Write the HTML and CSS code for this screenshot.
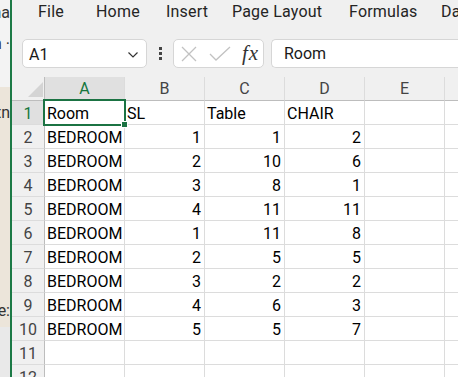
FILE: index.html
```html
<!DOCTYPE html>
<html>
<head>
<meta charset="utf-8">
<link rel="stylesheet" href="styles.css">
</head>
<body>
<div class="desk">
  <div class="dtop">
    <div class="frag f1"><span>Forma</span></div>
    <div class="frag f2"><span>Alignm ·</span></div>
  </div>
  <div class="dmid">
    <div class="frag f3"><span>Contn</span></div>
    <div class="frag f4"><span>Name:</span></div>
  </div>
  <div class="dbot"></div>
</div>
<div class="app">
  <div class="tabs">
    <span class="tab w-file">File</span>
    <span class="tab w-home">Home</span>
    <span class="tab w-insert">Insert</span>
    <span class="tab w-page">Page Layout</span>
    <span class="tab w-form">Formulas</span>
    <span class="tab">Data</span>
  </div>
  <div class="fbar">
    <div class="namebox">
      <span class="nbtext">A1</span>
      <svg class="chev" width="12" height="8" viewBox="0 0 12 8"><polyline points="1.5,1.5 6,6 10.5,1.5" fill="none" stroke="#333" stroke-width="1.2"/></svg>
    </div>
    <div class="dots"><i></i><i></i><i></i></div>
    <div class="fxbox">
      <svg width="16" height="16" viewBox="0 0 16 16"><path d="M1 1 L15 15 M15 1 L1 15" stroke="#c2c2c2" stroke-width="1.3" fill="none"/></svg>
      <svg width="22" height="16" viewBox="0 0 22 16"><polyline points="1,8 7,14 21,1" stroke="#c2c2c2" stroke-width="1.3" fill="none"/></svg>
      <span class="fx">fx</span>
    </div>
    <div class="finput">Room</div>
  </div>
  <div class="sheet">
    <div class="corner"><svg width="16" height="16" viewBox="0 0 16 16"><polygon points="16,1 16,16 1,16" fill="#d4d4d4"/></svg></div>
    <div class="ch sel">A</div><div class="ch">B</div><div class="ch">C</div><div class="ch">D</div><div class="ch">E</div><div class="ch last"></div>

    <div class="rh sel">1</div><div class="c active">Room<span class="selbox"></span><span class="handle"></span></div><div class="c">SL</div><div class="c">Table</div><div class="c">CHAIR</div><div class="c"></div><div class="c last"></div>
    <div class="rh">2</div><div class="c">BEDROOM</div><div class="c n">1</div><div class="c n">1</div><div class="c n">2</div><div class="c"></div><div class="c last"></div>
    <div class="rh">3</div><div class="c">BEDROOM</div><div class="c n">2</div><div class="c n">10</div><div class="c n">6</div><div class="c"></div><div class="c last"></div>
    <div class="rh">4</div><div class="c">BEDROOM</div><div class="c n">3</div><div class="c n">8</div><div class="c n">1</div><div class="c"></div><div class="c last"></div>
    <div class="rh">5</div><div class="c">BEDROOM</div><div class="c n">4</div><div class="c n">11</div><div class="c n">11</div><div class="c"></div><div class="c last"></div>
    <div class="rh">6</div><div class="c">BEDROOM</div><div class="c n">1</div><div class="c n">11</div><div class="c n">8</div><div class="c"></div><div class="c last"></div>
    <div class="rh">7</div><div class="c">BEDROOM</div><div class="c n">2</div><div class="c n">5</div><div class="c n">5</div><div class="c"></div><div class="c last"></div>
    <div class="rh">8</div><div class="c">BEDROOM</div><div class="c n">3</div><div class="c n">2</div><div class="c n">2</div><div class="c"></div><div class="c last"></div>
    <div class="rh">9</div><div class="c">BEDROOM</div><div class="c n">4</div><div class="c n">6</div><div class="c n">3</div><div class="c"></div><div class="c last"></div>
    <div class="rh">10</div><div class="c">BEDROOM</div><div class="c n">5</div><div class="c n">5</div><div class="c n">7</div><div class="c"></div><div class="c last"></div>
    <div class="rh">11</div><div class="c"></div><div class="c"></div><div class="c"></div><div class="c"></div><div class="c"></div><div class="c last"></div>
    <div class="rh">12</div><div class="c"></div><div class="c"></div><div class="c"></div><div class="c"></div><div class="c"></div><div class="c last"></div>
  </div>
</div>
</body>
</html>
```

FILE: styles.css
```css
* { box-sizing: border-box; }
html, body { margin: 0; padding: 0; }
body {
  width: 458px;
  height: 377px;
  overflow: hidden;
  display: flex;
  font-family: Roboto, "Liberation Sans", sans-serif;
  background: #f0f0f0;
}

/* background window strip */
.desk {
  width: 10px;
  flex: none;
  display: flex;
  flex-direction: column;
  overflow: hidden;
  font-size: 16px;
  color: #333;
}
.dtop { height: 87px; background: #f3f3f3; }
.dmid { height: 240px; background: #ece5da; position: relative; }
.dbot { flex: 1; background: #e9e9e9; }
.frag {
  display: flex;
  justify-content: flex-end;
  white-space: nowrap;
  height: 20px;
  line-height: 20px;
}
.f1 { margin-top: 3px; }
.f2 { margin-top: 11px; }
.f3 { margin-top: 16px; }
.f4 { margin-top: 178px; }

/* excel window */
.app {
  flex: 1;
  min-width: 0;
  border-left: 2px solid #1c7a46;
  display: flex;
  flex-direction: column;
  background: #f0f0f0;
}
.tabs {
  height: 24px;
  display: flex;
  white-space: nowrap;
  font-size: 16px;
  line-height: 23px;
  color: #242424;
  padding-left: 26px;
  letter-spacing: 0.2px;
}
.tab { flex: none; }
.w-file { width: 58px; }
.w-home { width: 70px; }
.w-insert { width: 66px; }
.w-page { width: 117px; }
.w-form { width: 92px; }

.fbar {
  margin-top: 15px;
  height: 29px;
  display: flex;
  padding-left: 10px;
}
.namebox {
  width: 125px;
  height: 29px;
  background: #fff;
  border: 1px solid #d6d6d6;
  border-radius: 5px;
  display: flex;
  align-items: center;
  justify-content: space-between;
  padding: 1px 7px 0 6px;
  font-size: 16px;
  color: #1a1a1a;
}
.chev { margin-top: 2px; }
.dots {
  width: 26px;
  display: flex;
  flex-direction: column;
  align-items: center;
  justify-content: center;
  gap: 2px;
}
.dots i {
  display: block;
  width: 3px;
  height: 3px;
  background: #444;
}
.fxbox {
  width: 91px;
  height: 29px;
  background: #fff;
  border: 1px solid #d6d6d6;
  border-radius: 5px;
  display: flex;
  align-items: center;
  padding-left: 7px;
  gap: 12px;
}
.fx {
  font-family: "Liberation Serif", serif;
  font-style: italic;
  font-size: 21px;
  color: #333;
  letter-spacing: 1px;
  margin-left: -1px;
}
.finput {
  margin-left: 7px;
  flex: 1;
  height: 29px;
  background: #fff;
  border: 1px solid #d6d6d6;
  border-right: none;
  border-radius: 5px 0 0 5px;
  padding: 1px 0 0 12px;
  font-size: 16px;
  line-height: 26px;
  color: #1a1a1a;
}

/* sheet grid */
.sheet {
  margin-top: 9px;
  flex: 1;
  min-height: 0;
  overflow: hidden;
  display: grid;
  grid-template-columns: 33px repeat(5, 80px) 1fr;
  grid-template-rows: 24px;
  grid-auto-rows: 24px;
  background: #fff;
  font-size: 16px;
}
.corner {
  background: #f0f0f0;
  border-right: 1px solid #bdbdbd;
  border-bottom: 1px solid #bdbdbd;
  display: flex;
  align-items: flex-end;
  justify-content: flex-end;
  padding: 0 1px 3px 0;
}
.ch {
  background: #f0f0f0;
  border-right: 1px solid #dcdcdc;
  border-bottom: 1px solid #bdbdbd;
  text-align: center;
  line-height: 23px;
  color: #444;
}
.ch.sel { background: #e0e0e0; color: #16773d; }
.rh {
  background: #f0f0f0;
  border-right: 1px solid #bdbdbd;
  border-bottom: 1px solid #dcdcdc;
  text-align: center;
  line-height: 25px;
  color: #444;
}
.rh.sel { background: #e0e0e0; color: #16773d; }
.c {
  border-right: 1px solid #dcdcdc;
  border-bottom: 1px solid #dcdcdc;
  padding: 0 3px 0 2px;
  line-height: 25px;
  color: #000;
  white-space: nowrap;
}
.c.n { text-align: right; }
.last { border-right: none; }
.active { position: relative; }
.selbox {
  position: absolute;
  left: -2px;
  top: -2px;
  right: -2px;
  bottom: -2px;
  border: 2px solid #1b7343;
}
.handle {
  position: absolute;
  right: -4px;
  bottom: -4px;
  width: 7px;
  height: 7px;
  background: #1b7343;
  border: 1px solid #fff;
}
```
